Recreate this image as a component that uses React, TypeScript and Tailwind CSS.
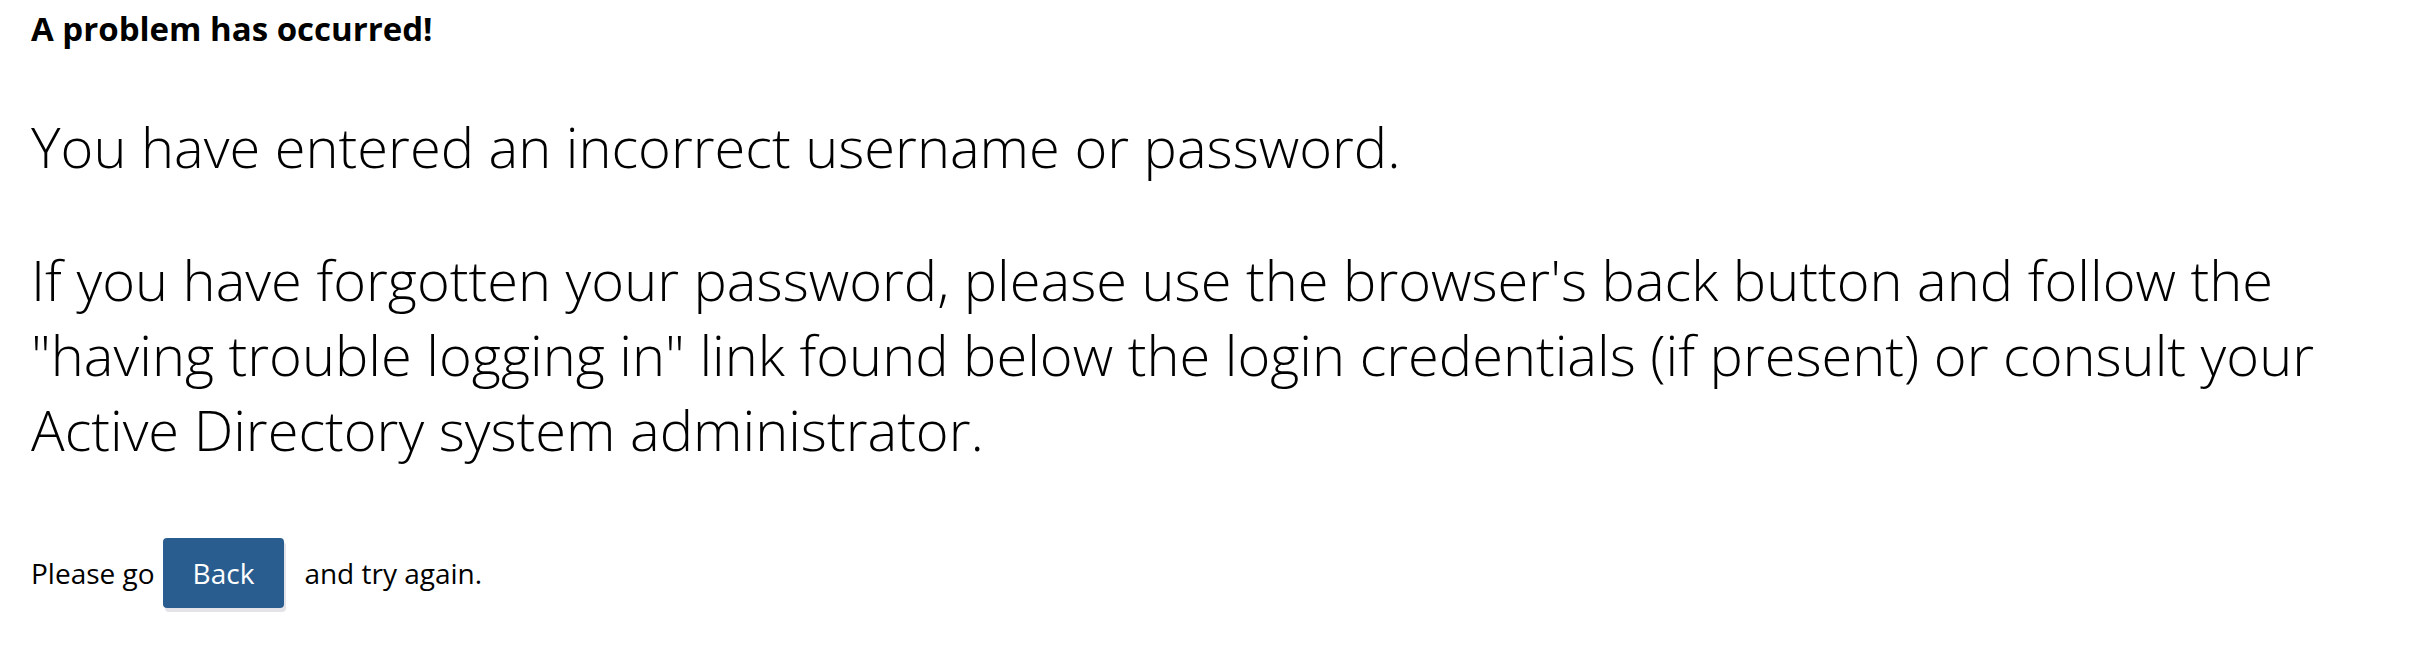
export default function App() {
  return (
    <div className="min-h-screen bg-white px-[31px] pt-[6px] text-black font-['Open_Sans',sans-serif]">
      <h1 className="text-[33px] leading-[45px] font-bold">A problem has occurred!</h1>
      <p className="mt-[58px] text-[56px] leading-[75px] font-light">
        You have entered an incorrect username or password.
      </p>
      <p className="mt-[58px] text-[56px] leading-[75px] font-light">
        If you have forgotten your password, please use the browser's back button and follow the
        "having trouble logging in" link found below the login credentials (if present) or consult
        your Active Directory system administrator.
      </p>
      <div className="mt-[71px] flex items-center text-[28px] leading-[37px]">
        <span>Please go</span>
        <button className="ml-[8px] h-[70px] rounded-[4px] bg-[#2a5d8f] px-[30px] text-white shadow-[2px_4px_0_#e3e3e8]">
          Back
        </button>
        <span className="ml-[20px]">and try again.</span>
      </div>
    </div>
  );
}
